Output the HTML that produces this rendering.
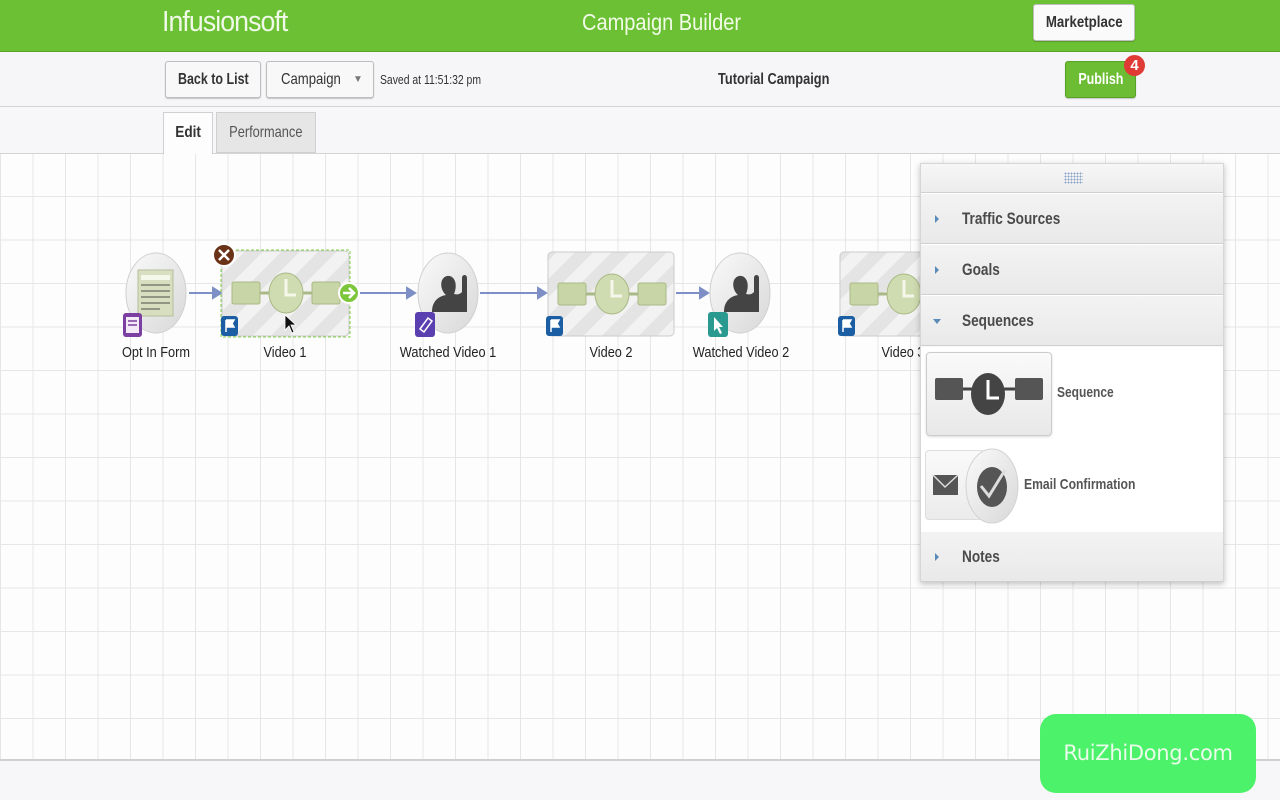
<!DOCTYPE html>
<html><head><meta charset="utf-8"><style>
*{margin:0;padding:0;box-sizing:border-box}
body{width:1280px;height:800px;overflow:hidden;background:#f7f6f8;font-family:"Liberation Sans",sans-serif;position:relative}
.hdr{position:absolute;left:0;top:0;width:1280px;height:52px;background:#6bc133;border-bottom:1px solid #5aa52a}
.abs{position:absolute}
.s{display:inline-block;transform:scaleX(.8);transform-origin:center;white-space:nowrap}
.sl{display:inline-block;transform:scaleX(.8);transform-origin:left center;white-space:nowrap}
.btn{position:absolute;background:#f8f8f8;border:1px solid #bdbdbd;border-radius:3px;box-shadow:0 1px 1px rgba(0,0,0,.2);font-weight:bold;color:#333;font-size:16px;text-align:center;white-space:nowrap;overflow:hidden}
.canvas{position:absolute;left:0;top:153px;width:1280px;height:608px;background-color:#fdfdfd;background-image:linear-gradient(to right,#e6e6e6 1px,transparent 1px),linear-gradient(to bottom,#e6e6e6 1px,transparent 1px);background-size:32.5px 43.5px;background-position:0 -1.5px;border-top:1px solid #d4d4d4;border-bottom:2px solid #cfcfcf}
.lbl{position:absolute;font-size:15px;color:#222;transform:translateX(-50%) scaleX(.85);white-space:nowrap}
.panel{position:absolute;left:920px;top:163px;width:304px;height:419px;background:#f8f8f8;border:1px solid #d6d6d6;box-shadow:0 2px 6px rgba(0,0,0,.25)}
.row{position:absolute;left:0;width:302px;height:51px;background:linear-gradient(#f3f3f3,#e9e9e9);border-top:1px solid #fff;border-bottom:1px solid #d0d0d0;font-weight:bold;font-size:17px;color:#4a4a4a;line-height:50px;padding-left:41px}
.row i{position:absolute;left:14px;top:21px;width:0;height:0;border-top:4px solid transparent;border-bottom:4px solid transparent;border-left:4px solid #5a8bb8}
.row i.d{border-left:4px solid transparent;border-right:4px solid transparent;border-top:5px solid #5a8bb8;border-bottom:0;left:12px;top:23px}
</style></head><body>
<div class="hdr"></div>
<div class="abs" style="left:162px;top:6px;font-size:29px;color:#f0f8e8;letter-spacing:-1px"><span class="sl" style="transform:scaleX(.92)">Infusionsoft</span></div>
<div class="abs" style="left:582px;top:9px;font-size:23px;color:#f2fbe8"><span class="sl" style="transform:scaleX(.87)">Campaign Builder</span></div>
<div class="btn" style="left:1033px;top:4px;width:102px;height:37px;line-height:35px;background:#fafafa"><span class="s" style="transform:scaleX(.83)">Marketplace</span></div>

<div class="abs" style="left:0;top:52px;width:1280px;height:55px;background:#f6f5f7;border-bottom:1px solid #d4d4d4"></div>
<div class="btn" style="left:165px;top:61px;width:96px;height:37px;line-height:35px"><span class="s" style="transform:scaleX(.78)">Back to List</span></div>
<div class="btn" style="left:266px;top:61px;width:108px;height:37px;line-height:35px;font-weight:normal;text-align:left;padding-left:14px"><span class="sl" style="transform:scaleX(.82)">Campaign</span><span class="abs" style="left:86px;top:0;font-size:10px;color:#777">▼</span></div>
<div class="abs" style="left:380px;top:72px;font-size:13px;color:#333"><span class="sl">Saved at 11:51:32 pm</span></div>
<div class="abs" style="left:718px;top:71px;font-size:16px;font-weight:bold;color:#333"><span class="sl">Tutorial Campaign</span></div>
<div class="btn" style="left:1065px;top:61px;width:71px;height:37px;line-height:35px;background:#6cbd33;border-color:#57a226;color:#fff"><span class="s" style="transform:scaleX(.78)">Publish</span></div>
<div class="abs" style="left:1124px;top:55px;width:21px;height:21px;border-radius:50%;background:#e03a35;color:#fff;font-weight:bold;font-size:15px;text-align:center;line-height:21px">4</div>

<div class="abs" style="left:163px;top:112px;width:50px;height:42px;background:#fdfdfd;border:1px solid #d0d0d0;border-bottom:none;font-weight:bold;font-size:16px;color:#333;text-align:center;line-height:40px;z-index:2"><span class="s" style="transform:scaleX(.85)">Edit</span></div>
<div class="abs" style="left:216px;top:112px;width:100px;height:41px;background:#e6e6e6;border:1px solid #d0d0d0;font-size:16px;color:#555;text-align:center;line-height:40px"><span class="s">Performance</span></div>

<div class="canvas"></div>

<svg class="abs" style="left:0;top:0" width="1280" height="800">
<defs>
<linearGradient id="cg" x1="0" y1="0" x2="1" y2="1"><stop offset="0" stop-color="#fafafa"/><stop offset="1" stop-color="#d8d8d8"/></linearGradient>
<pattern id="st" width="26" height="26" patternUnits="userSpaceOnUse" patternTransform="rotate(45)"><rect width="26" height="26" fill="#e4e4e4"/><rect width="13" height="26" fill="#f2f2f2"/></pattern>
<g id="seq">
<rect x="10" y="31" width="28" height="22" rx="2" fill="#c8d5a6" stroke="#a9b985"/>
<rect x="90" y="31" width="28" height="22" rx="2" fill="#c8d5a6" stroke="#a9b985"/>
<line x1="38" y1="42" x2="90" y2="42" stroke="#a9b985" stroke-width="3"/>
<ellipse cx="64" cy="42" rx="17" ry="20" fill="#cfdbb0" stroke="#a9b985"/>
<path d="M64 28V44H74" stroke="#f4f7ea" stroke-width="3" fill="none"/>
</g>
<g id="person"><path d="M-18 22 C-18 10 -10 6 -4 5 C-10 0 -11 -12 -3 -14 C5 -15 8 -5 4 4 C8 5 10 4 12 2 L12 -12 C12 -16 17 -16 17 -12 L17 22 Z" fill="#444"/></g>
<g id="flag"><rect x="0" y="0" width="17" height="20" rx="3" fill="#1c5ea3"/><path d="M5 4V16M5 4H13L11 7.5 13 11H5" stroke="#fff" fill="#fff" stroke-width="1.5"/></g>
</defs>
<g stroke="#7d8fc4" stroke-width="2" fill="#7d8fc4">
<line x1="189" y1="293" x2="214" y2="293"/><path d="M213 288L221 293 213 298Z"/>
<line x1="360" y1="293" x2="407" y2="293"/><path d="M407 288L415 293 407 298Z"/>
<line x1="480" y1="293" x2="538" y2="293"/><path d="M538 288L546 293 538 298Z"/>
<line x1="676" y1="293" x2="700" y2="293"/><path d="M700 288L708 293 700 298Z"/>
</g>
<ellipse cx="156" cy="293" rx="30" ry="40" fill="url(#cg)" stroke="#d0d0d0"/>
<rect x="138" y="270" width="35" height="46" fill="#d8dfc0" stroke="#b4bc9b"/>
<rect x="141" y="275" width="29" height="5" fill="#f4f7ea"/>
<g stroke="#7a7f6e" stroke-width="1.5"><line x1="141" y1="285" x2="170" y2="285"/><line x1="141" y1="291" x2="170" y2="291"/><line x1="141" y1="297" x2="170" y2="297"/><line x1="141" y1="303" x2="170" y2="303"/><line x1="141" y1="309" x2="160" y2="309"/></g>
<rect x="123" y="313" width="19" height="24" rx="3" fill="#7a3fa0"/><rect x="126" y="317" width="13" height="16" fill="#f3e9f7"/><g stroke="#7a3fa0" stroke-width="1.5"><line x1="128" y1="321" x2="137" y2="321"/><line x1="128" y1="325" x2="137" y2="325"/></g>
<rect x="222" y="251" width="127" height="85" rx="4" fill="url(#st)" stroke="#ccc"/>
<rect x="221" y="250" width="129" height="87" fill="none" stroke="#7fd147" stroke-dasharray="3 2"/>
<use href="#seq" x="222" y="251"/>
<circle cx="349" cy="293" r="10" fill="#7cc63c" stroke="#fff" stroke-width="2"/><path d="M343 293H353M349 288L354 293 349 298" stroke="#fff" stroke-width="2.5" fill="none"/>
<circle cx="224" cy="255" r="11" fill="#6a3318" stroke="#fff" stroke-width="2"/><path d="M219 250L229 260M229 250L219 260" stroke="#fff" stroke-width="2.5"/>
<use href="#flag" x="221" y="316"/>
<path d="M285 315V330L289 326 292 333 294 332 291 325 296 325Z" fill="#111" stroke="#fff" stroke-width=".8"/>
<ellipse cx="448" cy="293" rx="30" ry="40" fill="url(#cg)" stroke="#d0d0d0"/>
<use href="#person" x="450" y="290"/>
<rect x="415" y="312" width="20" height="25" rx="3" fill="#5a3fb0"/><path d="M420 329L428 318 432 321 424 332Z" fill="none" stroke="#fff" stroke-width="1.5"/>
<rect x="548" y="252" width="126" height="84" rx="4" fill="url(#st)" stroke="#ccc"/>
<use href="#seq" x="548" y="252"/>
<use href="#flag" x="546" y="316"/>
<ellipse cx="740" cy="293" rx="30" ry="40" fill="url(#cg)" stroke="#d0d0d0"/>
<use href="#person" x="742" y="290"/>
<rect x="708" y="312" width="20" height="25" rx="3" fill="#2a9a90"/><path d="M714 317V331L717 328 720 334 722 333 719 327 723 327Z" fill="#fff"/>
<rect x="840" y="252" width="126" height="84" rx="4" fill="url(#st)" stroke="#ccc"/>
<use href="#seq" x="840" y="252"/>
<use href="#flag" x="838" y="316"/>
</svg>
<div class="lbl" style="left:156px;top:344px">Opt In Form</div>
<div class="lbl" style="left:285px;top:344px">Video 1</div>
<div class="lbl" style="left:448px;top:344px">Watched Video 1</div>
<div class="lbl" style="left:611px;top:344px">Video 2</div>
<div class="lbl" style="left:741px;top:344px">Watched Video 2</div>
<div class="lbl" style="left:903px;top:344px">Video 3</div>

<div class="panel">
<div class="abs" style="left:0;top:0;width:302px;height:29px;background:linear-gradient(#f7f7f7,#ececec);border-bottom:1px solid #d0d0d0"></div>
<div class="abs" style="left:143px;top:8px;width:19px;height:12px;background-image:radial-gradient(#8aa3c8 0.8px,transparent 1px);background-size:3px 3px"></div>
<div class="row" style="top:29px"><i></i><span class="sl">Traffic Sources</span></div>
<div class="row" style="top:80px"><i></i><span class="sl">Goals</span></div>
<div class="row" style="top:131px"><i class="d"></i><span class="sl">Sequences</span></div>
<div class="abs" style="left:0;top:183px;width:302px;height:184px;background:#fff"></div>
<div class="abs" style="left:5px;top:188px;width:126px;height:84px;border:1px solid #ccc;border-radius:4px;background:linear-gradient(#fafafa,#e8e8e8);box-shadow:0 1px 2px rgba(0,0,0,.15)"></div>
<svg class="abs" style="left:5px;top:188px" width="130" height="90">
<rect x="9" y="26" width="28" height="22" rx="2" fill="#555"/><rect x="89" y="26" width="28" height="22" rx="2" fill="#555"/>
<line x1="37" y1="37" x2="89" y2="37" stroke="#444" stroke-width="3"/>
<ellipse cx="62" cy="42" rx="17" ry="21" fill="#444"/><path d="M62 28V46H73" stroke="#fff" stroke-width="3" fill="none"/>
</svg>
<div class="abs" style="left:136px;top:220px;font-weight:bold;font-size:15px;color:#555"><span class="sl">Sequence</span></div>
<div class="abs" style="left:4px;top:286px;width:60px;height:70px;border:1px solid #ddd;border-radius:4px;background:linear-gradient(#fafafa,#ebebeb)"></div>
<svg class="abs" style="left:4px;top:284px" width="100" height="80">
<rect x="8" y="27" width="25" height="20" fill="#555"/><path d="M8 27L20 39 33 27" stroke="#ddd" fill="none" stroke-width="1.5"/>
<ellipse cx="67" cy="38" rx="26" ry="37" fill="url(#cg)" stroke="#d3d3d3"/>
<ellipse cx="67" cy="39" rx="15" ry="20" fill="#555"/><path d="M56 38L64 48 80 22" stroke="#ddd" stroke-width="3" fill="none"/>
</svg>
<div class="abs" style="left:103px;top:312px;font-weight:bold;font-size:15px;color:#555"><span class="sl" style="transform:scaleX(.81)">Email Confirmation</span></div>
<div class="row" style="top:367px;height:51px"><i></i><span class="sl">Notes</span></div>
</div>

<div class="abs" style="left:1040px;top:714px;width:216px;height:79px;border-radius:16px;background:#4cf26a;color:#e9fbe9;font-size:21px;text-align:center;line-height:79px;font-family:'DejaVu Sans','Liberation Sans',sans-serif;letter-spacing:-.3px">RuiZhiDong.com</div>
</body></html>
